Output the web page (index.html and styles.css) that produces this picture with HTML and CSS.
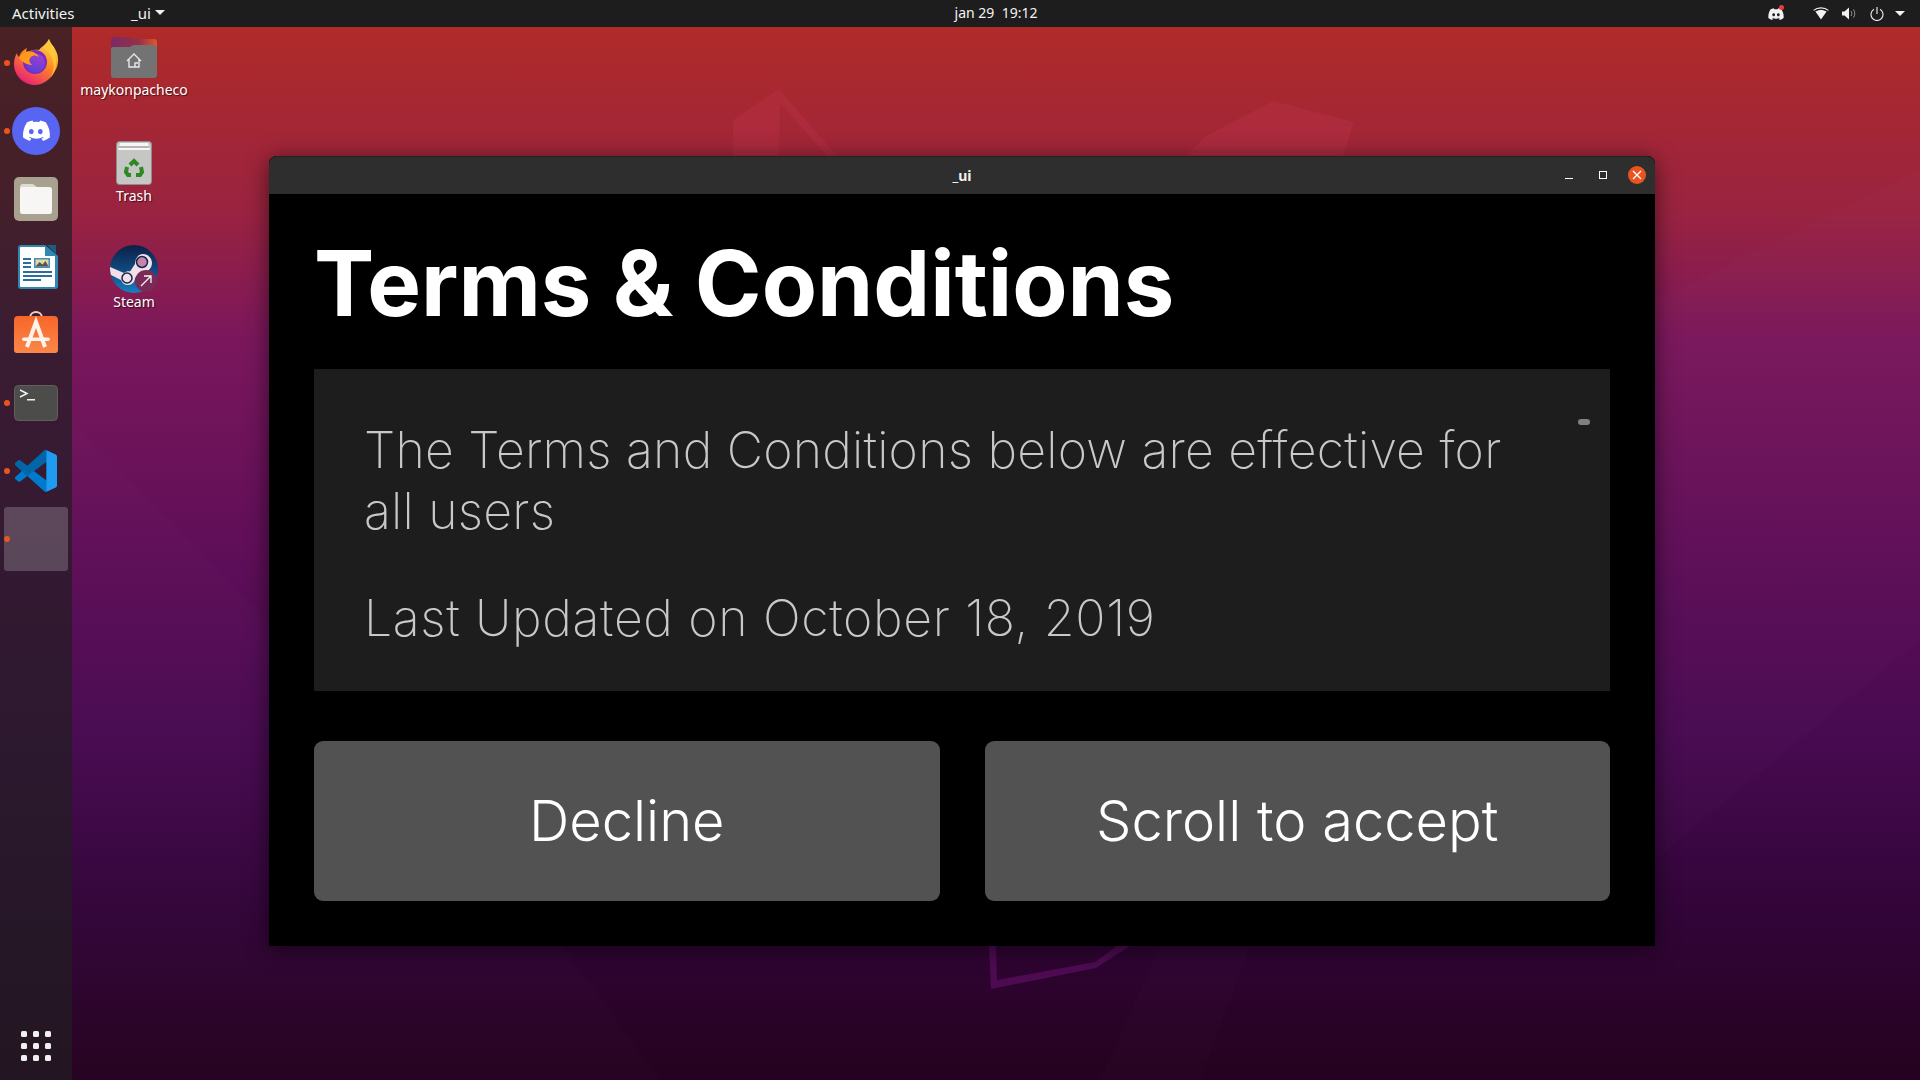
FILE: index.html
```html
<!DOCTYPE html>
<html lang="en">

<head>
    <meta charset="UTF-8">
    <title>_ui</title>
    <link rel="stylesheet" href="styles.css">
</head>

<body>
    <!-- Wallpaper shapes -->
    <svg class="wallpaper-art" viewBox="0 0 1920 1080" aria-hidden="true">
        <g fill="#ff5a7a" fill-opacity="0.09">
            <polygon points="733,120 779,89 837,156 827,156 780,103 779,156 733,156" />
            <polygon points="1185,156 1206,136 1273,101 1354,122 1343,156" />
        </g>
        <polygon fill="#5a0d5e" fill-opacity="0.75" points="989,946 991,989 1096,968 1130,946 1117,946 1095,962 997,980 996,946" />
        <g fill="#ffffff" fill-opacity="0.012">
            <polygon points="72,420 500,860 660,1080 72,1080" />
            <polygon points="1655,300 1920,170 1920,640 1655,860" />
            <polygon points="1100,1080 1160,946 1250,946 1200,1080" />
        </g>
    </svg>

    <header class="topbar">
        <div class="topbar-left">
            <span class="activities">Activities</span>
            <span class="app-menu">_ui <i class="caret"></i></span>
        </div>
        <div class="clock">jan 29&nbsp;&nbsp;19:12</div>
        <div class="tray">
            <span class="tray-discord">
                <svg width="16" height="12" viewBox="0 0 24 18">
                    <path fill="#f2f2f2" d="M20 2A19 19 0 0 0 15.300.5l-.7 1.400a17 17 0 0 0-5.200 0L8.700.5A19 19 0 0 0 4 2C1 6.400.2 10.700.6 15a19 19 0 0 0 5.800 3l1.200-2a12 12 0 0 1-1.900-.9l.5-.4a13 13 0 0 0 11.600 0l.5.400a12 12 0 0 1-1.900.9l1.200 2a19 19 0 0 0 5.800-3c.5-5-.8-9.300-3.400-13zM8.500 12.400c-1.100 0-2.100-1-2.100-2.300s.9-2.300 2.100-2.300 2.100 1 2.100 2.300-.9 2.300-2.100 2.300zm7 0c-1.100 0-2.100-1-2.100-2.300s.9-2.300 2.100-2.300 2.100 1 2.100 2.300-.9 2.300-2.100 2.300z" />
                </svg>
                <i class="tray-dot"></i>
            </span>
            <svg class="tray-wifi" width="16" height="13" viewBox="0 0 16 13">
                <path fill="none" stroke="#f2f2f2" stroke-width="1.200" d="M.6 3.400C4.700.1 11.300.1 15.400 3.400" />
                <path fill="#f2f2f2" d="M2.400 4.600c3.300-2.300 7.900-2.300 11.200 0L8 12.600z" />
            </svg>
            <svg class="tray-volume" width="15" height="13" viewBox="0 0 15 13">
                <path fill="#f2f2f2" d="M0 4.500h2.500L7 .5v12l-4.500-4H0z" />
                <path fill="none" stroke="#9a9a9a" stroke-width="1" d="M9 4c1 1.500 1 3.500 0 5M11.500 2.500c1.700 2.500 1.700 5.500 0 8" />
            </svg>
            <svg class="tray-power" width="14" height="14" viewBox="0 0 14 14">
                <path fill="none" stroke="#f2f2f2" stroke-width="1.100" d="M4 2.300a6 6 0 1 0 6 0M7 0v7" />
            </svg>
            <i class="caret"></i>
        </div>
    </header>

    <div class="workspace">
        <nav class="dock">
            <div class="dock-item running">
                <svg width="48" height="48" viewBox="0 0 48 48">
                    <defs>
                        <linearGradient id="ffOuter" x1="0.8" y1="0" x2="0.2" y2="1">
                            <stop offset="0" stop-color="#ffe14d" />
                            <stop offset="0.45" stop-color="#ff8a1e" />
                            <stop offset="1" stop-color="#e6177f" />
                        </linearGradient>
                        <linearGradient id="ffGlobe" x1="0.7" y1="0" x2="0.3" y2="1">
                            <stop offset="0" stop-color="#a03fd0" />
                            <stop offset="1" stop-color="#5a3fd6" />
                        </linearGradient>
                    </defs>
                    <path fill="url(#ffOuter)" d="M37 0c1 4 5 7 7 12 3 6 3 14-1 20-4 8-12 14-20 14C11 46 2 36 2 25c0-4 1-8 3-11 0 2 1 3 2 4 1-4 4-7 8-9-1 2-1 4 0 5 3-3 8-4 12-3 2-3 7-5 10-11z" />
                    <path fill="#ffc83a" d="M37 0c-1 4-4 6-6 9 5 2 9 7 10 13 2 7 0 13-3 17 4-4 6-10 6-16 0-9-5-15-7-23z" />
                    <circle cx="23" cy="23" r="12" fill="#7a2bc2" />
                    <circle cx="23.500" cy="24" r="9.500" fill="url(#ffGlobe)" />
                    <path fill="#ff9a1f" d="M7 19c3-5 9-8 14-6 3 1 5 3 6 5-3-2-6-2-8 0-3 3-1 6 1 8-4 0-9-2-13-7z" />
                </svg>
            </div>
            <div class="dock-item running">
                <svg width="48" height="48" viewBox="0 0 48 48">
                    <circle cx="24" cy="24" r="24" fill="#5865f2" />
                    <path fill="#ffffff" d="M33.600 15.300a22 22 0 0 0-5.500-1.700l-.7 1.400a20 20 0 0 0-6.100 0l-.7-1.400a22 22 0 0 0-5.500 1.700c-3.500 5.200-4.400 10.200-4 15.200a22 22 0 0 0 6.800 3.400l1.400-2.300-2.200-1 .6-.5a15.700 15.700 0 0 0 13.500 0l.6.5-2.200 1 1.400 2.300a22 22 0 0 0 6.800-3.400c.5-5.800-1-10.800-4-15.200zM19.300 27.300c-1.300 0-2.400-1.200-2.400-2.700s1-2.700 2.400-2.700 2.500 1.200 2.400 2.700c0 1.500-1 2.700-2.400 2.700zm9 0c-1.300 0-2.400-1.200-2.400-2.700s1-2.700 2.400-2.700 2.500 1.200 2.400 2.700c0 1.500-1 2.700-2.400 2.700z" />
                </svg>
            </div>
            <div class="dock-item">
                <svg width="48" height="48" viewBox="0 0 48 48">
                    <rect x="2" y="2" width="44" height="44" rx="5" fill="#a8a18f" />
                    <path fill="#dedbd2" d="M8 12a3 3 0 0 1 3-3h9c2 0 3 2 5 3v6H8z" />
                    <rect x="8" y="12" width="32" height="27" rx="2.500" fill="#f7f6f4" />
                </svg>
            </div>
            <div class="dock-item">
                <svg width="48" height="48" viewBox="0 0 48 48">
                    <path fill="#2f88b4" d="M9 2h24l13 11v30a3 3 0 0 1-3 3H9a3 3 0 0 1-3-3V5a3 3 0 0 1 3-3z" />
                    <path fill="#ffffff" d="M9 4h24v9h10v30a1 1 0 0 1-1 1H9a1 1 0 0 1-1-1V5a1 1 0 0 1 1-1z" />
                    <path fill="#1c5f86" d="M35 2h9v9z" />
                    <g fill="#2a6f9b">
                        <rect x="11" y="15" width="8" height="2" />
                        <rect x="11" y="19" width="8" height="2" />
                        <rect x="11" y="23" width="8" height="2" />
                        <rect x="11" y="28" width="29" height="2" />
                        <rect x="11" y="32" width="29" height="2" />
                        <rect x="11" y="36" width="18" height="2" />
                    </g>
                    <rect x="22" y="15" width="16" height="10" fill="#3f8fc0" />
                    <rect x="23.500" y="16.500" width="13" height="7" fill="#e8d8a0" />
                    <path fill="#555555" d="M23.500 23.500l4-4.500 3 2.500 3-3.500 3 5.500z" />
                </svg>
            </div>
            <div class="dock-item">
                <svg width="48" height="48" viewBox="0 0 48 48">
                    <defs>
                        <linearGradient id="shopBg" x1="0" y1="0" x2="0" y2="1">
                            <stop offset="0" stop-color="#f6662a" />
                            <stop offset="1" stop-color="#fb8748" />
                        </linearGradient>
                    </defs>
                    <path fill="none" stroke="#f4cfae" stroke-width="2" d="M18 7c0-8 12-8 12 0" />
                    <path fill="url(#shopBg)" d="M6 5h36a4 4 0 0 1 4 4v30a3 3 0 0 1-3 3H5a3 3 0 0 1-3-3V9a4 4 0 0 1 4-4z" />
                    <path fill="none" stroke="#fff3ea" stroke-width="4" d="M15 36L24 11l9 25" />
                    <rect x="10" y="26.500" width="28" height="3.500" rx="1.750" fill="#fff3ea" />
                </svg>
            </div>
            <div class="dock-item running">
                <svg width="48" height="48" viewBox="0 0 48 48">
                    <rect x="2.500" y="6.500" width="43" height="35" rx="4" fill="#4c4c4a" stroke="#5f5f5d" />
                    <path fill="none" stroke="#f2f2f2" stroke-width="1.500" d="M8 11l7 3.500-7 3.500" />
                    <rect x="15" y="20" width="8" height="1.500" fill="#f2f2f2" />
                </svg>
            </div>
            <div class="dock-item running">
                <svg width="42" height="42" viewBox="0 0 100 100">
                    <path fill="#007acc" d="M96.500 10.800L75.900.9a6.200 6.200 0 0 0-7.100 1.200L29.400 38.100 12.200 25.100a4.200 4.200 0 0 0-5.300.2L1.400 30.300a4.200 4.200 0 0 0 0 6.200L16.300 50 1.400 63.500a4.200 4.200 0 0 0 0 6.200l5.500 5a4.200 4.200 0 0 0 5.300.2l17.200-13 39.400 36a6.200 6.200 0 0 0 7.100 1.200l20.600-9.900a6.200 6.200 0 0 0 3.500-5.600V16.400a6.200 6.200 0 0 0-3.500-5.600zM75 72.700L45.100 50 75 27.300z" />
                    <path fill="#0065a9" d="M75 .4a6.200 6.200 0 0 0-6.200 1.700L29.400 38.100 12.200 25.100a4.200 4.200 0 0 0-5.300.2L1.400 30.300a4.200 4.200 0 0 0 0 6.200L16.300 50l12.500 12L45.100 50 75 27.300z" />
                    <path fill="#1f9cf0" d="M75 .4l.9.500 20.600 9.900a6.200 6.200 0 0 1 3.500 5.600v67.200a6.200 6.200 0 0 1-3.500 5.600l-20.600 9.900-.9.500z" />
                </svg>
            </div>
            <div class="dock-item running active"></div>
            <div class="show-apps">
                <i></i><i></i><i></i><i></i><i></i><i></i><i></i><i></i><i></i>
            </div>
        </nav>

        <section class="desktop">
            <div class="desktop-icon">
                <svg width="48" height="48" viewBox="0 0 48 48">
                    <defs>
                        <linearGradient id="folderTab" x1="0" y1="0" x2="1" y2="0">
                            <stop offset="0" stop-color="#7c2a62" />
                            <stop offset="0.6" stop-color="#94304a" />
                            <stop offset="1" stop-color="#e0562a" />
                        </linearGradient>
                    </defs>
                    <path fill="url(#folderTab)" d="M4 4h15l3 2h22a3 3 0 0 1 3 3v10H1V7a3 3 0 0 1 3-3z" />
                    <path fill="#737373" d="M3 14h16c2 0 3-2 5-2h20a3 3 0 0 1 3 3v27a3 3 0 0 1-3 3H4a3 3 0 0 1-3-3V16a2 2 0 0 1 2-2z" />
                    <path fill="none" stroke="#e8e8e8" stroke-width="1.400" d="M17 28l7-7 7 7M19 26v8h10v-8M25 34v-4h3" />
                </svg>
                <span>maykonpacheco</span>
            </div>
            <div class="desktop-icon">
                <svg width="48" height="48" viewBox="0 0 48 48">
                    <rect x="6.500" y="2.500" width="35" height="43" rx="3" fill="#c6c6c4" stroke="#8e8e8c" />
                    <path fill="#f6f6f4" d="M10 4h28l2 7H8z" />
                    <rect x="9" y="7" width="30" height="2" fill="#b5b5b3" />
                    <g fill="none" stroke="#2d8a22" stroke-width="4">
                        <path d="M20 26l4-4 4 4" />
                        <path d="M31 28l1 5-2 3h-4" />
                        <path d="M21 36h-3l-2-3 1-5" />
                    </g>
                </svg>
                <span>Trash</span>
            </div>
            <div class="desktop-icon">
                <svg width="48" height="48" viewBox="0 0 48 48">
                    <defs>
                        <linearGradient id="steamBg" x1="0.5" y1="0" x2="0.5" y2="1">
                            <stop offset="0" stop-color="#0e1f45" />
                            <stop offset="0.6" stop-color="#10508a" />
                            <stop offset="1" stop-color="#1a7fc0" />
                        </linearGradient>
                    </defs>
                    <circle cx="24" cy="24" r="24" fill="url(#steamBg)" />
                    <path fill="#f3dfe8" d="M0 22l14 6c2-1.500 4-2 6-1.500l5-7.500c0-5 3-10 8-10 5 0 9 4 9 9s-4 9-9 9l-8 6c0 4-3 7-7 7-3.500 0-6-2-7-5L1 30c-.7-2.500-1-5-1-8z" />
                    <circle cx="32" cy="17" r="5.500" fill="#c486a8" stroke="#13264f" stroke-width="1.500" />
                    <circle cx="17" cy="33" r="5" fill="#f3dfe8" stroke="#13264f" stroke-width="1.500" />
                    <circle cx="36" cy="36" r="11" fill="#7a2a56" />
                    <path fill="none" stroke="#f5f5f5" stroke-width="1.300" d="M31 41l10-10M34 31h7v7" />
                </svg>
                <span>Steam</span>
            </div>
        </section>

        <div class="window">
            <div class="titlebar">
                <span class="window-title">_ui</span>
                <div class="window-buttons">
                    <i class="btn-min"></i>
                    <i class="btn-max"></i>
                    <span class="btn-close">
                        <svg width="10" height="10" viewBox="0 0 10 10">
                            <path stroke="#ffffff" stroke-width="1.300" d="M1 1l8 8M9 1l-8 8" />
                        </svg>
                    </span>
                </div>
            </div>
            <main class="window-body">
                <h1>Terms &amp; Conditions</h1>
                <div class="terms-box">
                    <p class="terms-intro">The Terms and Conditions below are effective for all users</p>
                    <p>Last Updated on October 18, 2019</p>
                    <i class="scroll-thumb"></i>
                </div>
                <div class="actions">
                    <button>Decline</button>
                    <button>Scroll to accept</button>
                </div>
            </main>
        </div>
    </div>
</body>

</html>
```

FILE: styles.css
```css
* {
    margin: 0;
    padding: 0;
    box-sizing: border-box;
}

body {
    position: relative;
    width: 1920px;
    height: 1080px;
    overflow: hidden;
    display: flex;
    flex-direction: column;
    font-family: "Noto Sans", sans-serif;
    background: linear-gradient(180deg, #b02b29 27px, #9a2340 210px, #7a175c 340px, #5e0e58 560px, #470a50 740px, #33053a 900px, #25021f 1080px);
}

.wallpaper-art {
    position: absolute;
    left: 0;
    top: 0;
    width: 1920px;
    height: 1080px;
}

/* Barra de cima */
.topbar {
    position: relative;
    height: 27px;
    flex-shrink: 0;
    display: flex;
    align-items: center;
    justify-content: space-between;
    background-color: #1d1d1d;
    color: #f2f2f2;
    font-size: 15px;
}

.topbar-left {
    width: 472px;
    margin-bottom: 2px;
    display: flex;
    align-items: center;
    padding-left: 12px;
}

.activities {
    width: 119px;
}

.app-menu {
    display: flex;
    align-items: center;
    gap: 4px;
}

.caret {
    display: block;
    width: 0;
    height: 0;
    border-left: 5px solid transparent;
    border-right: 5px solid transparent;
    border-top: 5px solid #f2f2f2;
}

.clock {
    margin-bottom: 2px;
    font-size: 14px;
    text-align: center;
}

.tray {
    width: 400px;
    display: flex;
    align-items: center;
    justify-content: flex-end;
    padding-right: 15px;
}

.tray-discord {
    position: relative;
    display: flex;
    margin-right: 29px;
}

.tray-dot {
    position: absolute;
    top: -3px;
    right: 0;
    width: 5px;
    height: 5px;
    border-radius: 50%;
    background-color: #ed3b3b;
}

.tray-wifi {
    margin-right: 13px;
}

.tray-volume {
    margin-right: 13px;
}

.tray-power {
    margin-right: 11px;
}

.workspace {
    position: relative;
    flex: 1;
    display: flex;
}

/* Dock */
.dock {
    width: 72px;
    padding-top: 2px;
    display: flex;
    flex-direction: column;
    align-items: center;
    background-color: rgba(34, 30, 34, 0.72);
}

.dock-item {
    position: relative;
    width: 72px;
    height: 68px;
    display: flex;
    align-items: center;
    justify-content: center;
}

.dock-item.running::before {
    content: "";
    position: absolute;
    left: 4px;
    top: 31px;
    width: 6px;
    height: 6px;
    border-radius: 50%;
    background-color: #e9541f;
}

.dock-item.active::after {
    content: "";
    width: 64px;
    height: 64px;
    border-radius: 3px;
    background-color: rgba(255, 255, 255, 0.2);
}

.show-apps {
    margin-top: auto;
    margin-bottom: 19px;
    display: grid;
    grid-template-columns: repeat(3, 6px);
    grid-auto-rows: 6px;
    gap: 6px;
}

.show-apps i {
    display: block;
    border-radius: 1.500px;
    background-color: #f0f0f0;
}

/* Icones da area de trabalho */
.desktop {
    width: 106px;
    margin-left: 9px;
    padding-top: 6px;
}

.desktop-icon {
    height: 106px;
    display: flex;
    flex-direction: column;
    align-items: center;
    color: #ffffff;
    font-size: 14px;
    line-height: 18px;
    text-shadow: 1px 1px 1px rgba(0, 0, 0, 0.6);
}

/* Janela */
.window {
    position: absolute;
    left: 269px;
    top: 129px;
    width: 1386px;
    height: 790px;
    display: flex;
    flex-direction: column;
    border-radius: 8px 8px 0 0;
    background-color: #000000;
    box-shadow: 0 3px 22px rgba(0, 0, 0, 0.55);
}

.titlebar {
    position: relative;
    height: 38px;
    flex-shrink: 0;
    display: flex;
    align-items: center;
    justify-content: center;
    border-radius: 8px 8px 0 0;
    border-top: 1px solid #222222;
    background-color: #2e2e2e;
}

.window-title {
    color: #f2f2f2;
    font-size: 14px;
    font-weight: 700;
}

.window-buttons {
    position: absolute;
    right: 9px;
    top: 9px;
    display: flex;
    align-items: center;
}

.btn-min {
    display: block;
    width: 8px;
    height: 1px;
    margin: 6px 26px 0 0;
    background-color: #ffffff;
}

.btn-max {
    display: block;
    width: 8px;
    height: 8px;
    margin-right: 21px;
    border: 1px solid #ffffff;
}

.btn-close {
    width: 18px;
    height: 18px;
    display: flex;
    align-items: center;
    justify-content: center;
    border-radius: 50%;
    background-color: #e95420;
}

.window-body {
    flex: 1;
    padding: 36px 45px 45px;
    display: flex;
    flex-direction: column;
    font-family: Inter, sans-serif;
}

h1 {
    margin-bottom: 31px;
    color: #ffffff;
    font-size: 90.300px;
    font-weight: 700;
    line-height: 108px;
}

.terms-box {
    position: relative;
    height: 322px;
    padding: 51px 74px 0 50px;
    background-color: #1d1d1d;
    color: #c8c8c8;
    font-size: 50px;
    font-weight: 180;
    line-height: 61px;
    letter-spacing: 0.66px;
}

.terms-box p {
    margin-bottom: 46px;
}

.terms-box .terms-intro {
    letter-spacing: 0.22px;
}

.scroll-thumb {
    position: absolute;
    left: 1264px;
    top: 50px;
    width: 12px;
    height: 6px;
    border-radius: 3px;
    background-color: #808080;
}

.actions {
    margin-top: 50px;
    display: flex;
    gap: 45px;
}

.actions button {
    flex: 1;
    height: 160px;
    border: none;
    border-radius: 9px;
    background-color: #525252;
    color: #ffffff;
    font-family: Inter, sans-serif;
    font-size: 56px;
    font-weight: 300;
}
```
